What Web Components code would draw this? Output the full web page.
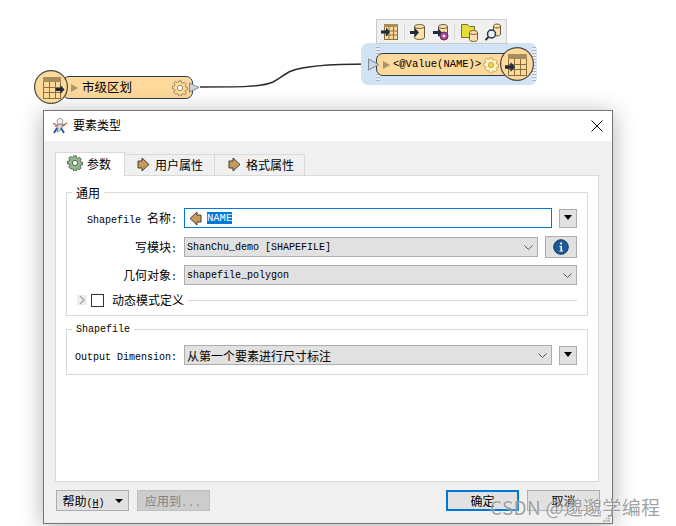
<!DOCTYPE html>
<html lang="zh">
<head>
<meta charset="utf-8">
<title>要素类型</title>
<style>
  html, body { margin: 0; padding: 0; background: #fff; }
  body { font: 12px "Noto Sans CJK SC", "Liberation Sans", sans-serif; color: #000; }
  .mono { font: 10px "Liberation Mono", monospace; }
  .dots { font: 10px "Liberation Mono", monospace; letter-spacing: 1px; }
</style>
</head>
<body>
<fme-canvas>
  <fme-node slot="nodes" style="left:34px;top:70px" label="市级区划" kind="source"></fme-node>
  <fme-node slot="nodes" style="left:361px;top:43px" label="<@Value(NAME)>" kind="target"></fme-node>
</fme-canvas>

<fme-dialog heading="要素类型">
  <fme-tabs>
    <group-box heading="通用" cjk style="height:130px">
      <form-row label="Shapefile 名称:" top="9">
        <text-field value="NAME"></text-field>
        <menu-button></menu-button>
      </form-row>
      <form-row label="写模块:" top="8" h="22">
        <drop-combo mono value="ShanChu_demo [SHAPEFILE]"></drop-combo>
        <info-button></info-button>
      </form-row>
      <form-row label="几何对象:" top="7">
        <drop-combo mono value="shapefile_polygon"></drop-combo>
      </form-row>
      <expand-row label="动态模式定义"></expand-row>
    </group-box>
    <group-box heading="Shapefile" style="height:52px;margin-top:7px">
      <form-row label="Output Dimension:" top="9">
        <drop-combo value="从第一个要素进行尺寸标注"></drop-combo>
        <menu-button></menu-button>
      </form-row>
    </group-box>
  </fme-tabs>
  <dlg-footer slot="footer">
    <dlg-button caret>帮助<span class="mono">(<u>H</u>)</span></dlg-button>
    <dlg-button disabled>应用到<span class="dots">...</span></dlg-button>
    <dlg-button slot="right" primary>确定</dlg-button>
    <dlg-button slot="right">取消</dlg-button>
  </dlg-footer>
</fme-dialog>
<water-mark>CSDN @邈邈学编程</water-mark>

<script>
const tableIcon = (x, y, w, h) => `
  <svg width="34" height="34" viewBox="0 0 34 34">
    <circle cx="17" cy="17" r="16.4" fill="#fdd99b" stroke="#4a4a42" stroke-width="1.2"/>
    <rect x="${x + .5}" y="${y + .5}" width="${w}" height="${h}" fill="#fdd99b" stroke="#8a6f3e"/>
    <rect x="${x}" y="${y}" width="${w + 1}" height="5" fill="#a88d5a"/>
    <path d="M${x} ${y + 10.5}h${w}M${x} ${y + 15.5}h${w}M${x + 6.5} ${y + 5}v${h - 5}M${x + 12.5} ${y + 5}v${h - 5}" stroke="#8a6f3e" fill="none"/>
  </svg>`;
const ARROW_DARK = `<path d="M0 3h5V0l4 4.5L5 9V6H0z" fill="#1f2d3a"/>`;
const gear = (size, fill, stroke, hub = '#fff') => `
  <svg width="${size}" height="${size}" viewBox="0 0 18 18" style="display:block">
    <path d="M7.600 1h2.800l.4 2.200 1.300.6 1.900-1.200 2 2-1.200 1.900.6 1.300 2.100.4v2.800l-2.100.4-.6 1.300 1.200 1.900-2 2-1.900-1.200-1.300.6-.4 2.100H7.600l-.4-2.100-1.300-.6L4 15.600l-2-2 1.200-1.900-.6-1.300L.5 10V7.200l2.100-.4.6-1.300L2 3.600l2-2 1.900 1.200 1.300-.6z" fill="${fill}" stroke="${stroke}" stroke-width="1"/>
    <circle cx="9" cy="9" r="3" fill="${hub}" stroke="${stroke}" stroke-width="1"/>
  </svg>`;
const brownArrow = (flip) => `
  <svg width="13" height="15" viewBox="0 0 13 15" style="display:block${flip ? ';transform:scaleX(-1)' : ''}">
    <path d="M1 4h4V1l7 6.500L5 14v-3H1z" fill="#c59a5f" stroke="#4b3d2a"/>
  </svg>`;
const cylinder = (x, y, w, h) => `
  <path d="M${x} ${y + 2}c0-2.600 ${w}-2.600 ${w} 0v${h}c0 2.600-${w} 2.600-${w} 0z" fill="#fde2ae" stroke="#6d5a3a"/>
  <path d="M${x} ${y + 2}c0 2.600 ${w} 2.600 ${w} 0" fill="none" stroke="#6d5a3a"/>`;

class FmeCanvas extends HTMLElement {
  constructor() {
    super();
    this.attachShadow({ mode: 'open' }).innerHTML = `
      <style>
        :host { display: block; position: relative; width: 676px; height: 110px; }
        svg.wire { position: absolute; left: 0; top: 0; }
        .toolbar {
          position: absolute; left: 376px; top: 19px; width: 131px; height: 25px; z-index: 2;
          display: flex; align-items: center; gap: 3px; padding-left: 4px; box-sizing: border-box;
          background: #efefef; border: 1px solid #cbcbcb;
        }
        .toolbar svg { display: block; flex: none; }
        .sep { width: 1px; height: 17px; background: #d6d6d6; flex: none; }
      </style>
      <svg class="wire" width="676" height="110">
        <path d="M200 87C240 87 262 87 273 82C280 78 285 74 290 71.500C300 67 320 64 368 64" fill="none" stroke="#2b2b2b" stroke-width="1.500"/>
      </svg>
      <slot name="nodes"></slot>
      <div class="toolbar">
        <svg width="20" height="20" viewBox="0 0 20 20"><rect x="3.500" y="2.500" width="13" height="15" fill="#fdd99b" stroke="#8a6f3e"/><rect x="3" y="2" width="14" height="3" fill="#a88d5a"/><path d="M4 9h12M4 13h12M8 5v12M12.500 5v12" stroke="#8a6f3e"/><g transform="translate(0 5.500)">${ARROW_DARK}</g></svg>
        <div class="sep"></div>
        <svg width="20" height="20" viewBox="0 0 20 20">${cylinder(6.5, 2.5, 10, 11)}<g transform="translate(2 6)">${ARROW_DARK}</g></svg>
        <svg width="20" height="20" viewBox="0 0 20 20">${cylinder(7.5, 2.5, 9, 8)}<g transform="translate(2 6)">${ARROW_DARK}</g><circle cx="13" cy="14" r="4" fill="#b24a9a" stroke="#5b2a58"/><circle cx="13" cy="14" r="1.300" fill="#fff"/></svg>
        <div class="sep"></div>
        <svg width="20" height="20" viewBox="0 0 20 20"><path d="M3.500 2.500h6l2 2h5v11h-13z" fill="#e6dc3c" stroke="#77741e"/>${cylinder(11.5, 8.5, 8, 7)}</svg>
        <svg width="20" height="20" viewBox="0 0 20 20">${cylinder(12.5, 2, 7, 8)}<circle cx="10.500" cy="12" r="4" fill="#e9f1f6" stroke="#24333f" stroke-width="1.500"/><path d="M7.500 15l-3 3" stroke="#24333f" stroke-width="2"/></svg>
      </div>`;
  }
}

class FmeNode extends HTMLElement {
  connectedCallback() {
    const label = this.getAttribute('label');
    const target = this.getAttribute('kind') === 'target';
    const root = this.shadowRoot || this.attachShadow({ mode: 'open' });
    root.innerHTML = `
      <style>
        :host { display: block; position: absolute; }
        .sel { width: 176px; height: 42px; border-radius: 7px; background: #d3e3f6; position: relative; }
        .body {
          position: absolute; box-sizing: border-box; height: 23px;
          background: #fdd99b; border: 1px solid #2f3d4b; border-radius: 7px;
          display: flex; align-items: center; color: #000; white-space: nowrap;
        }
        .tri { width: 0; height: 0; border-left: 7px solid #a8956c; border-top: 4.500px solid transparent; border-bottom: 4.500px solid transparent; flex: none; }
        .label { font: 12.500px "Noto Sans CJK SC", sans-serif; margin: -3px 0 0 4px; }
        .code { font: 10.500px "Liberation Mono", monospace; margin: -2px 0 0 3px; }
        .ball { position: absolute; display: block; }
        .ball svg { display: block; }
        .ball .arrow { position: absolute; }
        .port { position: absolute; }
        .dots { position: absolute; top: 4px; width: 4px; height: 34px; background: repeating-linear-gradient(#b5b5b5 0 1px, #e6eef8 1px 3px); }
      </style>
      ${target ? `
        <div class="sel">
          <div class="dots" style="left:15px"></div>
          <div class="dots" style="right:1px"></div>
          <svg class="port" style="left:7px;top:15px;z-index:1" width="12" height="13" viewBox="0 0 12 13"><path d="M.5 1L11 6.500 .5 12z" fill="#ccd6de" stroke="#7b8790"/></svg>
          <div class="body" style="left:15px;top:10px;width:135px;padding-left:6px">
            <span class="tri"></span><span class="code">${label.replace(/</g, '&lt;')}</span>
            <span style="margin-left:2px">${gear(16, '#fff3c0', '#b9a15a', '#f8d23c')}</span>
          </div>
          <div class="ball" style="left:139px;top:4px">${tableIcon(8, 7, 18, 21)}<svg class="arrow" style="left:4px;top:15px" width="12" height="10" viewBox="0 0 9 9">${ARROW_DARK}</svg></div>
        </div>` : `
        <div style="width:170px;height:36px;position:relative">
          <div class="ball" style="left:0;top:0;z-index:1">${tableIcon(9, 7, 17, 21)}<svg class="arrow" style="left:21px;top:15px" width="10" height="9" viewBox="0 0 9 9">${ARROW_DARK}</svg></div>
          <div class="body" style="left:28px;top:6px;width:131px;padding-left:8px">
            <span class="tri"></span><span class="label">${label}</span>
            <span style="margin-left:auto;margin-right:4px">${gear(16, '#fdd99b', '#8c7d5c')}</span>
          </div>
          <svg class="port" style="left:155px;top:12px" width="11" height="11" viewBox="0 0 11 11"><path d="M.5 1L10 5.500 .5 10z" fill="#ccd6de" stroke="#7b8790"/></svg>
        </div>`}`;
  }
}

class FmeDialog extends HTMLElement {
  connectedCallback() {
    const root = this.shadowRoot || this.attachShadow({ mode: 'open' });
    root.innerHTML = `
      <style>
        :host {
          display: flex; flex-direction: column; position: absolute; left: 43px; top: 110px;
          width: 570px; height: 414px; box-sizing: border-box;
          background: #f0f0f0; border: 1px solid #747474; box-shadow: 0 3px 22px rgba(0,0,0,.3);
        }
        .title { height: 30px; background: #fff; display: flex; align-items: center; flex: none; padding-left: 8px; }
        .title span { margin: -3px 0 0 5px; font-size: 12px; }
        .title svg { display: block; margin-top: -1px; }
        .close { margin-left: auto; margin-right: 9px; }
        .content { flex: 1; min-height: 0; padding: 11px 13px 0 11px; display: flex; flex-direction: column; }
        .grip { position: absolute; right: 2px; bottom: 1px; }
      </style>
      <div class="title">
        <svg width="16" height="16" viewBox="0 0 16 16">
          <circle cx="8" cy="3.500" r="3" fill="#efefef" stroke="#8a8a8a" stroke-width=".8"/>
          <path d="M3 8l5-2 5 1-3 2-1 3-4 2 1-4z" fill="#d5d8dc" stroke="#5a5a5a" stroke-width=".6"/>
          <path d="M5 10l-3 5M9 10l3 5" stroke="#1f56a8" stroke-width="1.800"/>
          <path d="M1 5l5 3M10 8l5-3" stroke="#c2603a" stroke-width="1.300"/>
        </svg>
        <span>${this.getAttribute('heading')}</span>
        <svg class="close" width="12" height="12" viewBox="0 0 12 12"><path d="M.5.500l11 11M11.500.500l-11 11" stroke="#111" fill="none"/></svg>
      </div>
      <div class="content">
        <slot></slot>
        <slot name="footer"></slot>
      </div>
      <svg class="grip" width="7" height="7" viewBox="0 0 7 7"><path d="M5 0h2v2H5zM2.500 2.500h2v2h-2zM5 2.500h2v2H5zM0 5h2v2H0zM2.500 5h2v2h-2zM5 5h2v2H5z" fill="#bdbdbd"/></svg>`;
  }
}

class FmeTabs extends HTMLElement {
  constructor() {
    super();
    this.attachShadow({ mode: 'open' }).innerHTML = `
      <style>
        :host { display: block; }
        .bar { display: flex; align-items: flex-end; height: 23px; }
        .tab {
          box-sizing: border-box; height: 21px; margin-left: -1px; display: flex; align-items: center;
          background: #f0f0f0; border: 1px solid #d9d9d9; border-bottom: 0; padding: 0 0 2px 13px; font-size: 12px;
        }
        .tab svg { margin-right: 5px; display: block; flex: none; }
        .tab.on { height: 24px; width: 70px; margin: 0 0 -1px 0; background: #fff; padding: 0 0 3px 11px; position: relative; z-index: 1; }
        .tab.on svg { margin-right: 4px; }
        .panel {
          box-sizing: border-box; height: 307px; background: #fff; border: 1px solid #d9d9d9;
          padding: 10px 10px 0 10px;
        }
      </style>
      <div class="bar">
        <div class="tab on">${gear(16, '#8fb98b', '#3f5a45')}参数</div>
        <div class="tab" style="width:91px;padding-left:12px">${brownArrow(false)}用户属性</div>
        <div class="tab" style="width:91px">${brownArrow(false)}格式属性</div>
      </div>
      <div class="panel"><slot></slot></div>`;
  }
}

class GroupBox extends HTMLElement {
  connectedCallback() {
    const cjk = this.hasAttribute('cjk');
    const root = this.shadowRoot || this.attachShadow({ mode: 'open' });
    root.innerHTML = `
      <style>
        :host { display: block; box-sizing: border-box; position: relative; }
        fieldset { margin: 0; padding: 0 10px 0 0; height: 100%; box-sizing: border-box; border: 1px solid #d9d9d9; min-width: 0; }
        legend { margin-left: 5px; padding: 0 4px;
          font: ${cjk ? '12px "Noto Sans CJK SC"' : '10px "Liberation Mono"'}, monospace; line-height: 13px; }
      </style>
      <fieldset><legend>${this.getAttribute('heading')}</legend><slot></slot></fieldset>`;
  }
}

class FormRow extends HTMLElement {
  connectedCallback() {
    const root = this.shadowRoot || this.attachShadow({ mode: 'open' });
    const top = this.getAttribute('top') || 0;
    const h = this.getAttribute('h') || 20;
    const raw = this.getAttribute('label');
    const label = raw.replace(/^[A-Za-z ]+/, m => `<span class="m">${m}</span>`).replace(/:$/, '<span class="m">:</span>');
    root.innerHTML = `
      <style>
        :host { display: grid; grid-template-columns: 110px 1fr; column-gap: 7px; align-items: center; height: ${h}px; margin-top: ${top}px; }
        .l { text-align: right; font-size: 12px; white-space: nowrap; margin-top: -2px; }
        .m { font: 10px "Liberation Mono", monospace; }
        .f { display: flex; gap: 7px; align-items: center; min-width: 0; }
      </style>
      <div class="l">${label}</div>
      <div class="f"><slot></slot></div>`;
  }
}

class TextField extends HTMLElement {
  connectedCallback() {
    const root = this.shadowRoot || this.attachShadow({ mode: 'open' });
    root.innerHTML = `
      <style>
        :host { display: flex; flex: 1; align-items: center; box-sizing: border-box; height: 20px; background: #fff; border: 1px solid #0078d7; padding-left: 4px; min-width: 0; }
        svg { display: block; }
        .sel { margin-left: 5px; background: #0078d7; color: #fff; font: 10.500px/12px "Liberation Mono", monospace; height: 12px; }
      </style>
      ${brownArrow(true)}<span class="sel">${this.getAttribute('value')}</span>`;
  }
}

class DropCombo extends HTMLElement {
  connectedCallback() {
    const mono = this.hasAttribute('mono');
    const root = this.shadowRoot || this.attachShadow({ mode: 'open' });
    root.innerHTML = `
      <style>
        :host { display: flex; flex: 1; align-items: center; box-sizing: border-box; height: 20px; min-width: 0; background: #e1e1e1; border: 1px solid #adadad; padding: 0 4px 0 2px; }
        span { font: ${mono ? '10px "Liberation Mono", monospace' : '12px "Noto Sans CJK SC", sans-serif'}; white-space: nowrap; }
        svg { margin-left: auto; display: block; }
      </style>
      <span>${this.getAttribute('value')}</span>
      <svg width="9" height="5" viewBox="0 0 9 5"><path d="M.5.500l4 4 4-4" fill="none" stroke="#555"/></svg>`;
  }
}

class MenuButton extends HTMLElement {
  constructor() {
    super();
    this.attachShadow({ mode: 'open' }).innerHTML = `
      <style>
        :host { display: flex; flex: none; align-items: center; justify-content: center; box-sizing: border-box; width: 18px; height: 19px; background: #e1e1e1; border: 1px solid #adadad; }
        i { width: 0; height: 0; border-left: 4.500px solid transparent; border-right: 4.500px solid transparent; border-top: 5px solid #000; margin-top: -2px; }
      </style><i></i>`;
  }
}

class InfoButton extends HTMLElement {
  constructor() {
    super();
    this.attachShadow({ mode: 'open' }).innerHTML = `
      <style>
        :host { display: flex; flex: none; align-items: center; justify-content: center; box-sizing: border-box; width: 32px; height: 22px; background: #e1e1e1; border: 1px solid #adadad; }
        svg { display: block; }
      </style>
      <svg width="16" height="16" viewBox="0 0 16 16">
        <circle cx="8" cy="8" r="7.300" fill="#1d5a96" stroke="#12385f"/>
        <path d="M6.500 7h2.500v4.500h1v1H6.500v-1h1V8h-1zM7.200 3.500h1.800v2H7.200z" fill="#fff"/>
      </svg>`;
  }
}

class ExpandRow extends HTMLElement {
  connectedCallback() {
    const root = this.shadowRoot || this.attachShadow({ mode: 'open' });
    root.innerHTML = `
      <style>
        :host { display: flex; align-items: center; height: 14px; margin: 8px 0 0 10px; font-size: 12px; }
        svg { display: block; flex: none; margin-right: 4px; }
        .box { box-sizing: border-box; width: 13px; height: 13px; background: #fff; border: 1px solid #333; flex: none; margin-right: 8px; }
        span { margin-top: -2px; }
        .rule { flex: 1; height: 1px; background: #d9d9d9; margin-left: 4px; }
      </style>
      <svg width="10" height="10" viewBox="0 0 10 10" style="background:#eee"><path d="M3 1l4 4-4 4" fill="none" stroke="#aaa" stroke-width="1.500"/></svg>
      <div class="box"></div><span>${this.getAttribute('label')}</span><div class="rule"></div>`;
  }
}

class DlgFooter extends HTMLElement {
  constructor() {
    super();
    this.attachShadow({ mode: 'open' }).innerHTML = `
      <style>
        :host { display: flex; justify-content: space-between; margin: 8px -1px 0 0; padding-left: 1px; }
        div { display: flex; gap: 8px; }
      </style>
      <div><slot></slot></div><div><slot name="right"></slot></div>`;
  }
}

class DlgButton extends HTMLElement {
  connectedCallback() {
    const root = this.shadowRoot || this.attachShadow({ mode: 'open' });
    const primary = this.hasAttribute('primary');
    const disabled = this.hasAttribute('disabled');
    const caret = this.hasAttribute('caret');
    root.innerHTML = `
      <style>
        :host {
          display: flex; align-items: center; justify-content: center; box-sizing: border-box; width: 73px; height: 21px; font-size: 12px; gap: 10px;
          background: ${disabled ? '#cccccc' : '#e1e1e1'}; color: ${disabled ? '#838383' : '#000'};
          border: ${primary ? '2px solid #0078d7' : '1px solid ' + (disabled ? '#bfbfbf' : '#adadad')};
        }
        i { width: 0; height: 0; border-left: 4px solid transparent; border-right: 4px solid transparent; border-top: 4px solid #000; }
      </style><span><slot></slot></span>${caret ? '<i></i>' : ''}`;
  }
}

class WaterMark extends HTMLElement {
  constructor() {
    super();
    this.attachShadow({ mode: 'open' }).innerHTML = `
      <style>
        :host { position: absolute; left: 490px; top: 493px; font: 19px "Noto Sans CJK SC", sans-serif; letter-spacing: .3px; color: rgba(125,125,125,.72); white-space: nowrap; text-shadow: 0 0 2px rgba(255,255,255,.8); }
      </style><slot></slot>`;
  }
}

customElements.define('fme-canvas', FmeCanvas);
customElements.define('fme-node', FmeNode);
customElements.define('fme-dialog', FmeDialog);
customElements.define('fme-tabs', FmeTabs);
customElements.define('group-box', GroupBox);
customElements.define('form-row', FormRow);
customElements.define('text-field', TextField);
customElements.define('drop-combo', DropCombo);
customElements.define('menu-button', MenuButton);
customElements.define('info-button', InfoButton);
customElements.define('expand-row', ExpandRow);
customElements.define('dlg-footer', DlgFooter);
customElements.define('dlg-button', DlgButton);
customElements.define('water-mark', WaterMark);
</script>
</body>
</html>
